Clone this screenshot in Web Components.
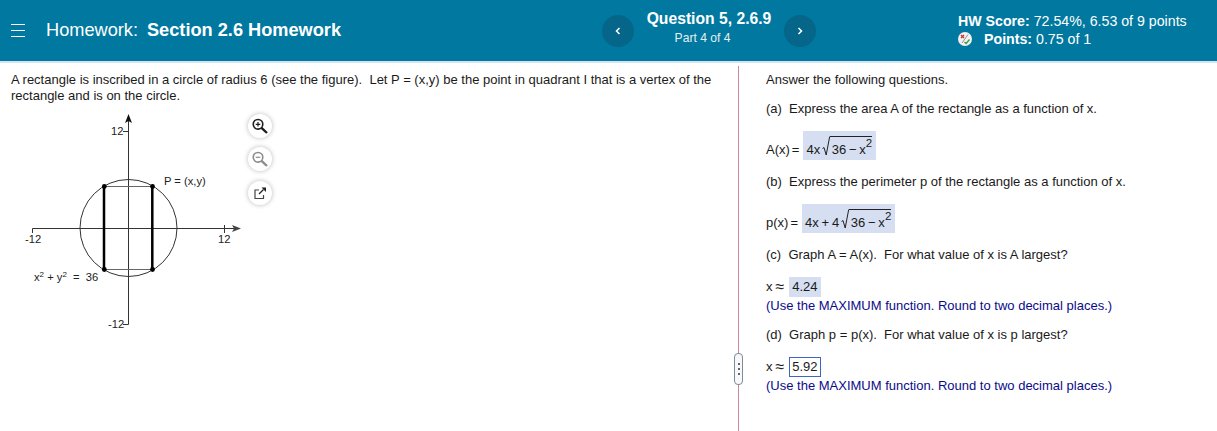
<!DOCTYPE html>
<html lang="en">
<head>
<meta charset="utf-8">
<title>Section 2.6 Homework</title>
<style>
    html, body { margin: 0; height: 100%; background: #fff; overflow: hidden; }
    body { font-family: "Liberation Sans", Arial, sans-serif; color: #1a1a1a; }
    hw-page { height: 431px; }
</style>
</head>
<body>
<hw-page>
    <hw-header slot="header"></hw-header>
    <question-pane slot="left"></question-pane>
    <split-handle slot="divider"></split-handle>
    <answer-pane slot="right"></answer-pane>
</hw-page>

<script>
/* Page frame: header on top, two panes with a divider below */
class HwPage extends HTMLElement {
    constructor() {
        super();
        this.attachShadow({ mode: "open" });
    }
    connectedCallback() {
        this.shadowRoot.innerHTML = `
            <style>
                :host { display: grid; grid-template-rows: 63px 1fr; width: 100%; }
                .body { display: grid; grid-template-columns: 739px 1fr; min-height: 0; }
                .divider { position: relative; }
            </style>
            <slot name="header"></slot>
            <div class="body">
                <div class="divider"><slot name="left"></slot><slot name="divider"></slot></div>
                <slot name="right"></slot>
            </div>
        `;
    }
}

class NavButton extends HTMLElement {
    constructor() {
        super();
        this.attachShadow({ mode: "open" });
    }
    connectedCallback() {
        const d = this.getAttribute("dir") === "next" ? "M6.5 5 L9.5 8 L6.5 11" : "M9.5 5 L6.5 8 L9.5 11";
        this.shadowRoot.innerHTML = `
            <style>
                :host { display: flex; align-items: center; justify-content: center; width: 32px; height: 32px; border-radius: 50%; background: #05668a; }
            </style>
            <svg width="16" height="16" viewBox="0 0 16 16"><path d="${d}" fill="none" stroke="#fff" stroke-width="1.5"/></svg>
        `;
    }
}

class HwHeader extends HTMLElement {
    constructor() {
        super();
        this.attachShadow({ mode: "open" });
    }
    connectedCallback() {
        this.shadowRoot.innerHTML = `
            <style>
                :host { display: grid; grid-template-columns: 602px 214px 1fr; align-items: center; height: 61px; background: #00789f; border-bottom: 2px solid #d5e4ee; color: #fff; }
                .title { display: flex; align-items: center; padding-left: 11px; font-size: 18.2px; }
                .burger { display: block; margin-right: 21px; }
                b { font-weight: 700; margin-left: 9px; }
                .nav { display: flex; align-items: center; justify-content: space-between; }
                .q { text-align: center; line-height: 17px; margin-top: -5px; }
                .q b { margin: 0; font-size: 15.7px; display: block; line-height: 18px; }
                .q span { display: inline-block; margin-right: 13px; font-size: 12.1px; color: #e6f0f4; }
                .score { padding-left: 142px; font-size: 14.2px; line-height: 18px; margin-top: -2px; white-space: nowrap; }
                .score b { margin: 0; }
                .points { display: flex; align-items: center; }
                .points svg { margin-right: 12px; }
            </style>
            <div class="title">
                <svg class="burger" width="14" height="13" viewBox="0 0 14 13"><path d="M0 .5h14M0 6.500h14M0 12.500h14" stroke="#fff" stroke-width="1"/></svg>
                <span>Homework:</span><b>Section 2.6 Homework</b>
            </div>
            <div class="nav">
                <nav-button dir="prev"></nav-button>
                <div class="q"><b>Question 5, 2.6.9</b><span>Part 4 of 4</span></div>
                <nav-button dir="next"></nav-button>
            </div>
            <div class="score">
                <div><b>HW Score:</b> 72.54%, 6.53 of 9 points</div>
                <div class="points">
                    <svg width="14" height="14" viewBox="0 0 14 14">
                        <circle cx="7" cy="7" r="7" fill="#f2f2f2"/>
                        <path d="M3 3l3 3M6 3l-3 3" stroke="#c8322b" stroke-width="1.300"/>
                        <path d="M6.500 10l1.600 1.500L11.500 7.500" stroke="#3c9a3a" stroke-width="1.300" fill="none"/>
                        <path d="M10 2.500L4 11" stroke="#777" stroke-width=".8"/>
                    </svg>
                    <div><b>Points:</b> 0.75 of 1</div>
                </div>
            </div>
        `;
    }
}

/* Inscribed rectangle figure, 8px per unit, drawn in page coordinates */
class CircleFigure extends HTMLElement {
    constructor() {
        super();
        this.attachShadow({ mode: "open" });
    }
    connectedCallback() {
        this.shadowRoot.innerHTML = `
            <style>
                :host { display: block; width: 228px; height: 230px; flex: none; }
                svg { display: block; }
                text { font-family: "Liberation Sans", Arial, sans-serif; font-size: 11.2px; fill: #222; }
            </style>
            <svg width="228" height="230" viewBox="20 105 228 230">
                <g stroke="#333" stroke-width="1" fill="none">
                    <path d="M128.500 119V324.500H123"/>
                    <path d="M123 131.500H128.500"/>
                    <path d="M32.500 233V228.500H234M224.500 225V233"/>
                    <circle cx="128.500" cy="228" r="48.500"/>
                    <path d="M104 186.500H152.500M104 269.500H152.500" stroke="#666"/>
                </g>
                <path d="M128.500 114l-3.500 9 3.500-2 3.500 2z" fill="#111"/>
                <path d="M241 228.500l-9-3.500 2 3.500-2 3.500z" fill="#444"/>
                <path d="M104 186.500V269.500M152.300 186.500V269.500" stroke="#000" stroke-width="2.500"/>
                <circle cx="104.300" cy="186.500" r="2.400" fill="#000"/>
                <circle cx="152.500" cy="186.500" r="2.400" fill="#000"/>
                <circle cx="104.300" cy="269.500" r="2.400" fill="#000"/>
                <circle cx="152.500" cy="269.500" r="2.400" fill="#000"/>
                <text x="111" y="135">12</text>
                <text x="164" y="185">P = (x,y)</text>
                <text x="25" y="243">-12</text>
                <text x="218" y="243">12</text>
                <text x="108" y="328">-12</text>
                <text x="34" y="281">x<tspan dy="-4" font-size="8">2</tspan><tspan dy="4"> + y</tspan><tspan dy="-4" font-size="8">2</tspan><tspan dy="4" xml:space="preserve">  =  36</tspan></text>
            </svg>
        `;
    }
}

class ToolButton extends HTMLElement {
    constructor() {
        super();
        this.attachShadow({ mode: "open" });
    }
    connectedCallback() {
        const kind = this.getAttribute("kind");
        const glass = (c, plus) => `
            <circle cx="7" cy="7.300" r="4.800" fill="none" stroke="${c}" stroke-width="1.600"/>
            <path d="M10.500 10.800L16 16" stroke="${c}" stroke-width="2.400"/>
            <path d="M4.700 7.300h4.600${plus ? "M7 5v4.600" : ""}" stroke="${c}" stroke-width="1.200"/>`;
        const icons = {
            in: glass("#1d1d1d", true),
            out: glass("#8c8c8c", false),
            open: `<path d="M8 6H4V14.500H12.500V11" fill="none" stroke="#444" stroke-width="1.200"/>
                   <path d="M8 10L12.500 5.500" stroke="#222" stroke-width="1.300"/>
                   <path d="M10.500 3.500H15V8z" fill="#222"/>`
        };
        this.shadowRoot.innerHTML = `
            <style>
                :host { display: flex; align-items: center; justify-content: center; width: 24px; height: 24px; border-radius: 50%; background: #fff; box-shadow: 0 0 5px rgba(0,0,0,.28); }
            </style>
            <svg width="18" height="18" viewBox="0 0 18 18">${icons[kind]}</svg>
        `;
    }
}

class QuestionPane extends HTMLElement {
    constructor() {
        super();
        this.attachShadow({ mode: "open" });
    }
    connectedCallback() {
        this.shadowRoot.innerHTML = `
            <style>
                :host { display: block; padding: 9px 0 0 11px; font-size: 13px; line-height: 16px; color: #1a1a1a; }
                p { margin: 0; width: 712px; }
                .row { display: flex; margin: 1px 0 0 9px; }
                .tools { display: flex; flex-direction: column; gap: 9.500px; margin-top: 8.500px; }
            </style>
            <p>A rectangle is inscribed in a circle of radius 6 (see the figure).&nbsp; Let P = (x,y) be the point in quadrant I that is a vertex of the rectangle and is on the circle.</p>
            <div class="row">
                <circle-figure></circle-figure>
                <div class="tools">
                    <tool-button kind="in"></tool-button>
                    <tool-button kind="out"></tool-button>
                    <tool-button kind="open"></tool-button>
                </div>
            </div>
        `;
    }
}

/* Vertical rule with the little grip that sits over it */
class SplitHandle extends HTMLElement {
    constructor() {
        super();
        this.attachShadow({ mode: "open" });
    }
    connectedCallback() {
        this.shadowRoot.innerHTML = `
            <style>
                :host { position: absolute; top: 3px; bottom: 0; right: 0; width: 1px; background: #c9889d; }
                .grip { position: absolute; left: -4px; top: 287px; width: 9px; height: 32px; box-sizing: border-box; background: #f7f8fa; border: 1px solid #7d8c99; border-radius: 4px; display: flex; flex-direction: column; align-items: center; justify-content: center; gap: 3px; }
                i { display: block; width: 2px; height: 2px; background: #333; border-radius: 50%; }
            </style>
            <div class="grip"><i></i><i></i><i></i></div>
        `;
    }
}

/* Filled answer: shaded for correct ones, outlined for the active box */
class AnswerBox extends HTMLElement {
    constructor() {
        super();
        this.attachShadow({ mode: "open" });
    }
    connectedCallback() {
        this.shadowRoot.innerHTML = `
            <style>
                :host { display: inline-flex; align-items: center; box-sizing: border-box; height: 20px; padding: 0 3px; margin-left: 4px; background: #d5dff1; }
                :host([tall]) { height: 29px; align-items: flex-end; padding: 0 4px 2px 3px; }
                :host([active]) { background: #fff; border: 1px solid #3d64c8; padding: 0 2px; }
            </style>
            <slot></slot>
        `;
    }
}

class RootExpr extends HTMLElement {
    constructor() {
        super();
        this.attachShadow({ mode: "open" });
    }
    connectedCallback() {
        this.shadowRoot.innerHTML = `
            <style>
                :host { display: inline-flex; align-items: flex-end; margin-left: 1.500px; }
                svg { display: block; margin-bottom: 2px; margin-right: 0; align-self: flex-end; }
                .in { border-top: 1px solid #222; padding: 5px 0 0 2px; line-height: 16px; white-space: nowrap; }
            </style>
            <svg width="8" height="20" viewBox="0 0 8 20"><path d="M.5 12.500L2 11.500L4.200 19L7.700 .5" fill="none" stroke="#222" stroke-width="1"/></svg>
            <span class="in"><slot></slot></span>
        `;
    }
}

class AnswerPane extends HTMLElement {
    constructor() {
        super();
        this.attachShadow({ mode: "open" });
    }
    connectedCallback() {
        this.shadowRoot.innerHTML = `
            <style>
                :host { display: block; padding: 9px 0 0 27px; font-size: 13px; line-height: 16px; color: #1a1a1a; }
                .q { margin-top: 14px; }
                .q.near { margin-top: 13px; }
                .m { display: flex; align-items: center; margin-top: 14px; white-space: nowrap; word-spacing: -.8px; }
                .m.t { align-items: flex-end; }
                .m.t > span { padding-bottom: 2px; word-spacing: -1.600px; }
                .hint { color: #0b0b8a; margin-top: 1px; }
                .ap { font-size: 16px; line-height: 16px; margin: 0 1px 0 3px; }
                sup { font-size: 11.500px; line-height: 0; position: relative; top: -7.500px; left: 0; vertical-align: baseline; }
            </style>
            <div>Answer the following questions.</div>
            <div class="q near">(a)&nbsp; Express the area A of the rectangle as a function of x.</div>
            <div class="m t"><span>A(x) =</span><answer-box tall>4x<root-expr>36 − x<sup>2</sup></root-expr></answer-box></div>
            <div class="q">(b)&nbsp; Express the perimeter p of the rectangle as a function of x.</div>
            <div class="m t"><span>p(x) =</span><answer-box tall>4x + 4<root-expr>36 − x<sup>2</sup></root-expr></answer-box></div>
            <div class="q">(c)&nbsp; Graph A = A(x).&nbsp; For what value of x is A largest?</div>
            <div class="m">x<span class="ap">≈</span><answer-box>4.24</answer-box></div>
            <div class="hint">(Use the MAXIMUM function. Round to two decimal places.)</div>
            <div class="q near">(d)&nbsp; Graph p = p(x).&nbsp; For what value of x is p largest?</div>
            <div class="m">x<span class="ap">≈</span><answer-box active>5.92</answer-box></div>
            <div class="hint">(Use the MAXIMUM function. Round to two decimal places.)</div>
        `;
    }
}

customElements.define("hw-page", HwPage);
customElements.define("nav-button", NavButton);
customElements.define("hw-header", HwHeader);
customElements.define("circle-figure", CircleFigure);
customElements.define("tool-button", ToolButton);
customElements.define("question-pane", QuestionPane);
customElements.define("split-handle", SplitHandle);
customElements.define("answer-box", AnswerBox);
customElements.define("root-expr", RootExpr);
customElements.define("answer-pane", AnswerPane);
</script>
</body>
</html>
